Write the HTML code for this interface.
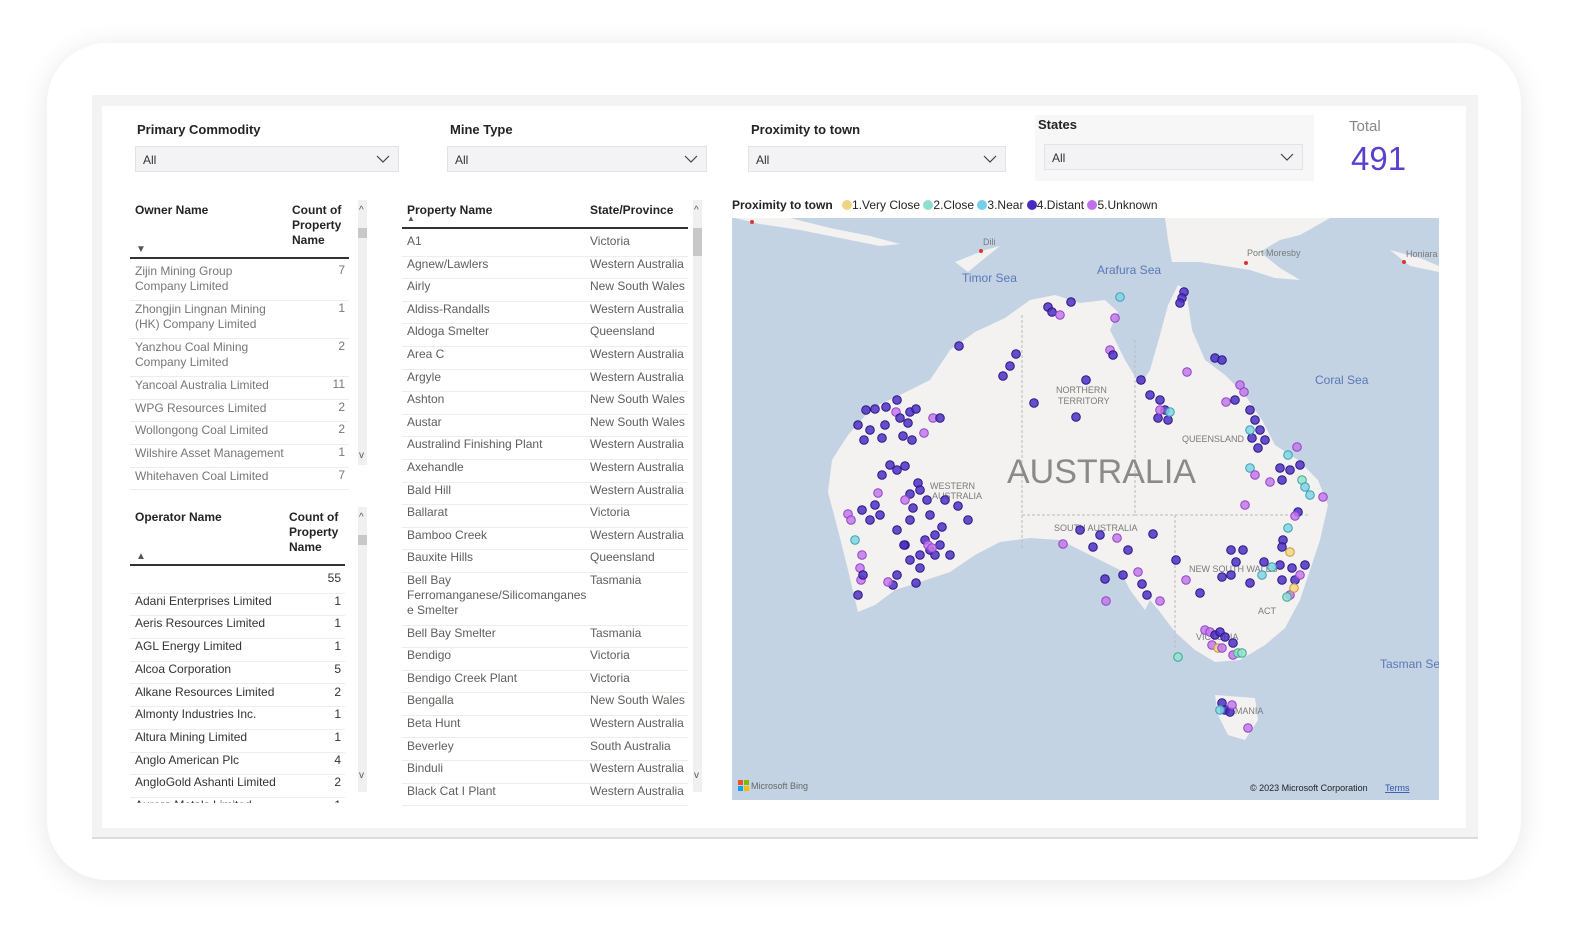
<!DOCTYPE html>
<html><head><meta charset="utf-8">
<style>
*{margin:0;padding:0;box-sizing:border-box}
body{width:1573px;height:934px;background:#fff;font-family:"Liberation Sans",sans-serif;position:relative;overflow:hidden}
.card{position:absolute;left:47px;top:43px;width:1474px;height:837px;border-radius:60px;background:#fff;box-shadow:0 4px 28px rgba(0,0,0,.10)}
.frame{position:absolute;left:92px;top:95px;width:1386px;height:744px;background:#f3f3f4;border-bottom:2px solid #dcdcde}
.panel{position:absolute;left:102px;top:106px;width:1364px;height:722px;background:#fff}
.abs{position:absolute}
.lbl{position:absolute;font-size:13px;font-weight:bold;color:#252423}
.dd{position:absolute;height:26px;background:#f3f3f5;border:1px solid #e3e3e6;font-size:12px;color:#333;padding:6px 7px}
.dd svg{position:absolute;right:8px;top:7px}
.th{position:absolute;font-size:12px;font-weight:bold;color:#252423;line-height:15px}
.row{position:absolute;font-size:12px;color:#605e5c;line-height:15px;border-bottom:1px solid #ededed}
.row .n{position:absolute;right:4px;top:0}
.sb{position:absolute;width:9px;background:#f0f0f0}
.sb .th2{position:absolute;left:0;width:9px;background:#c8c8c8}
.arr{position:absolute;font-size:10px;color:#555}
</style></head><body>
<div class="card"></div>
<div class="frame"></div>
<div class="panel"></div>

<div class="lbl" style="left:137px;top:122px">Primary Commodity</div>
<div class="dd" style="left:135px;top:146px;width:264px">All<svg width="14" height="10"><path d="M1 2 L7 8 L13 2" fill="none" stroke="#444" stroke-width="1.2"/></svg></div>
<div class="lbl" style="left:450px;top:122px">Mine Type</div>
<div class="dd" style="left:447px;top:146px;width:260px">All<svg width="14" height="10"><path d="M1 2 L7 8 L13 2" fill="none" stroke="#444" stroke-width="1.2"/></svg></div>
<div class="lbl" style="left:751px;top:122px">Proximity to town</div>
<div class="dd" style="left:748px;top:146px;width:258px">All<svg width="14" height="10"><path d="M1 2 L7 8 L13 2" fill="none" stroke="#444" stroke-width="1.2"/></svg></div>
<div class="abs" style="left:1035px;top:115px;width:279px;height:66px;background:#f7f7f8"></div>
<div class="lbl" style="left:1038px;top:117px">States</div>
<div class="dd" style="left:1044px;top:144px;width:259px">All<svg width="14" height="10"><path d="M1 2 L7 8 L13 2" fill="none" stroke="#444" stroke-width="1.2"/></svg></div>
<div class="abs" style="left:1349px;top:118px;font-size:15px;color:#8a8886">Total</div>
<div class="abs" style="left:1351px;top:140px;font-size:33px;color:#5a3fd0">491</div>

<div class="th" style="left:135px;top:203px">Owner Name</div>
<div class="th" style="left:292px;top:203px">Count of<br>Property<br>Name</div>
<div class="arr" style="left:136px;top:244px">▼</div>
<div class="abs" style="left:130px;top:257px;width:219px;height:2px;background:#333"></div>
<div class="sb" style="left:358px;top:200px;height:265px"><div class="th2" style="top:28px;height:10px"></div></div>
<div class="arr" style="left:359px;top:205px">^</div>
<div class="arr" style="left:359px;top:450px">v</div>

<div class="th" style="left:135px;top:510px">Operator Name</div>
<div class="th" style="left:289px;top:510px">Count of<br>Property<br>Name</div>
<div class="arr" style="left:136px;top:551px">▲</div>
<div class="abs" style="left:130px;top:564px;width:215px;height:2px;background:#333"></div>
<div class="sb" style="left:358px;top:507px;height:285px"><div class="th2" style="top:28px;height:10px"></div></div>
<div class="arr" style="left:359px;top:512px">^</div>
<div class="arr" style="left:359px;top:770px">v</div>

<div class="th" style="left:407px;top:203px">Property Name</div>
<div class="th" style="left:590px;top:203px">State/Province</div>
<div class="arr" style="left:407px;top:214px;font-size:8px">▲</div>
<div class="abs" style="left:402px;top:227px;width:286px;height:2px;background:#333"></div>
<div class="sb" style="left:693px;top:200px;height:592px"><div class="th2" style="top:28px;height:28px"></div></div>
<div class="arr" style="left:694px;top:205px">^</div>
<div class="arr" style="left:694px;top:770px">v</div>

<div id="rows"></div>
<div id="oprows" class="abs" style="left:0;top:0;width:400px;height:803px;overflow:hidden"></div>

<div class="abs" style="left:732px;top:198px;font-size:12px;color:#252423;white-space:nowrap">
<b>Proximity to town</b>
<span style="display:inline-block;width:10px;height:10px;border-radius:50%;background:#f2d384;margin-left:6px;vertical-align:-1px"></span>1.Very Close
<span style="display:inline-block;width:10px;height:10px;border-radius:50%;background:#8ee0cd;vertical-align:-1px"></span>2.Close
<span style="display:inline-block;width:10px;height:10px;border-radius:50%;background:#74d0e6;vertical-align:-1px"></span>3.Near
<span style="display:inline-block;width:10px;height:10px;border-radius:50%;background:#4a2bc0;vertical-align:-1px"></span>4.Distant
<span style="display:inline-block;width:10px;height:10px;border-radius:50%;background:#c170ec;vertical-align:-1px"></span>5.Unknown
</div>

<svg class="abs" style="left:732px;top:218px" width="707" height="582" viewBox="732 218 707 582">
<rect x="732" y="218" width="707" height="582" fill="#c3d3e3"/>
<path d="M735 218 L790 218 L830 228 L870 236 L900 244 L880 246 L840 238 L800 230 L760 224 Z" fill="#f3f2f0"/>
<path d="M955 262 L985 250 L1000 246 L985 258 L968 272 Z" fill="#f3f2f0"/>
<path d="M1165 218 L1330 218 L1300 235 L1280 240 L1260 252 L1280 268 L1300 280 L1275 278 L1250 270 L1225 266 L1200 262 L1172 262 L1168 240 Z" fill="#f3f2f0"/>
<path d="M1390 250 L1420 258 L1439 266 L1439 272 L1410 266 Z" fill="#f3f2f0"/>
<path d="M858 612 L848 570 L838 530 L828 492 L832 460 L848 435 L872 408 L900 395 L930 380 L950 350 L975 332 L1005 318 L1030 300 L1055 295 L1080 303 L1105 300 L1118 312 L1110 330 L1125 360 L1140 385 L1150 370 L1160 335 L1168 305 L1178 285 L1186 290 L1192 330 L1205 360 L1225 375 L1245 395 L1262 420 L1275 445 L1298 460 L1318 480 L1328 505 L1320 540 L1310 570 L1300 600 L1285 628 L1265 645 L1240 660 L1215 662 L1195 650 L1175 632 L1160 612 L1150 600 L1145 610 L1130 590 L1120 570 L1100 560 L1080 550 L1060 540 L1030 538 L1000 542 L975 555 L950 572 L920 582 L895 590 L875 605 Z" fill="#f3f2f0"/>
<path d="M1215 695 L1255 698 L1258 720 L1245 740 L1228 735 L1218 715 Z" fill="#f3f2f0"/>
<g stroke="#bbb" stroke-dasharray="3,2" fill="none" stroke-width="1">
<path d="M1022 315 L1022 550"/><path d="M1135 340 L1135 515 L1175 515 L1175 650"/><path d="M1022 515 L1135 515"/><path d="M1175 515 L1310 515"/>
</g>
<g font-family="Liberation Sans,sans-serif" fill="#7a7a7a" font-size="9">
<text x="1056" y="393">NORTHERN</text><text x="1058" y="404">TERRITORY</text>
<text x="1182" y="442">QUEENSLAND</text>
<text x="930" y="489">WESTERN</text><text x="932" y="499">AUSTRALIA</text>
<text x="1054" y="531">SOUTH AUSTRALIA</text>
<text x="1189" y="572">NEW SOUTH WALES</text>
<text x="1258" y="614">ACT</text>
<text x="1196" y="640">VICTORIA</text>
<text x="1218" y="714">TASMANIA</text>
<text x="983" y="245">Dili</text><text x="1247" y="256">Port Moresby</text><text x="1406" y="257">Honiara</text>
</g>
<text x="1007" y="483" font-family="Liberation Sans,sans-serif" font-size="34" fill="#8a8a8a">AUSTRALIA</text>
<g font-family="Liberation Sans,sans-serif" fill="#5a78b8" font-size="12">
<text x="962" y="282">Timor Sea</text><text x="1097" y="274">Arafura Sea</text><text x="1315" y="384">Coral Sea</text><text x="1380" y="668">Tasman Sea</text>
</g>
<circle cx="981" cy="251" r="2" fill="#d33"/><circle cx="1246" cy="263" r="2" fill="#d33"/><circle cx="1404" cy="262" r="2" fill="#d33"/><circle cx="752" cy="222" r="2" fill="#d33"/>
<g id="dots" stroke-width="1"></g>
<rect x="738" y="780" width="5" height="5" fill="#f25022"/><rect x="744" y="780" width="5" height="5" fill="#7fba00"/><rect x="738" y="786" width="5" height="5" fill="#00a4ef"/><rect x="744" y="786" width="5" height="5" fill="#ffb900"/>
<text x="751" y="789" font-family="Liberation Sans,sans-serif" font-size="9" fill="#666">Microsoft Bing</text>
<text x="1250" y="791" font-family="Liberation Sans,sans-serif" font-size="9" fill="#222">© 2023 Microsoft Corporation</text>
<text x="1385" y="791" font-family="Liberation Sans,sans-serif" font-size="9" fill="#3355aa" text-decoration="underline">Terms</text>
</svg>

<script>
(function(){
var h='',h2='';
var own=[["Zijin Mining Group<br>Company Limited",7,38],["Zhongjin Lingnan Mining<br>(HK) Company Limited",1,38],["Yanzhou Coal Mining<br>Company Limited",2,38],["Yancoal Australia Limited",11,22.7],["WPG Resources Limited",2,22.7],["Wollongong Coal Limited",2,22.7],["Wilshire Asset Management",1,22.7],["Whitehaven Coal Limited",7,22.7]];
var y=263;
own.forEach(function(r){h+='<div class="row" style="left:130px;top:'+y+'px;width:219px;height:'+r[2]+'px;padding:1px 5px;color:#777">'+r[0]+'<span class="n">'+r[1]+'</span></div>';y+=r[2];});
var op=[["",55],["Adani Enterprises Limited",1],["Aeris Resources Limited",1],["AGL Energy Limited",1],["Alcoa Corporation",5],["Alkane Resources Limited",2],["Almonty Industries Inc.",1],["Altura Mining Limited",1],["Anglo American Plc",4],["AngloGold Ashanti Limited",2],["Aurora Metals Limited",1]];
y=571;
op.forEach(function(r){h2+='<div class="row" style="left:130px;top:'+y+'px;width:215px;height:22.7px;padding:0 5px;color:#333">'+r[0]+'<span class="n">'+r[1]+'</span></div>';y+=22.7;});
var pr=[["A1","Victoria"],["Agnew/Lawlers","Western Australia"],["Airly","New South Wales"],["Aldiss-Randalls","Western Australia"],["Aldoga Smelter","Queensland"],["Area C","Western Australia"],["Argyle","Western Australia"],["Ashton","New South Wales"],["Austar","New South Wales"],["Australind Finishing Plant","Western Australia"],["Axehandle","Western Australia"],["Bald Hill","Western Australia"],["Ballarat","Victoria"],["Bamboo Creek","Western Australia"],["Bauxite Hills","Queensland"],["Bell Bay<br>Ferromanganese/Silicomanganes<br>e Smelter","Tasmania",3],["Bell Bay Smelter","Tasmania"],["Bendigo","Victoria"],["Bendigo Creek Plant","Victoria"],["Bengalla","New South Wales"],["Beta Hunt","Western Australia"],["Beverley","South Australia"],["Binduli","Western Australia"],["Black Cat I Plant","Western Australia"]];
y=234;
pr.forEach(function(r){var hh=r[2]?52.5:22.6;h+='<div class="row" style="left:402px;top:'+y+'px;width:286px;height:'+hh+'px;padding:0 5px">'+r[0]+'<span style="position:absolute;left:188px;top:0">'+r[1]+'</span></div>';y+=hh;});
document.getElementById('rows').innerHTML=h;
document.getElementById('oprows').innerHTML=h2;
var C={D:['#4d30c4','#2a1680'],U:['#c27ae9','#9440c8'],N:['#80d4e4','#3a9fb5'],C:['#95e2cf','#3aa690'],V:['#f3d68a','#c59a30']};
var d="1048,307 1052,312 1060,315U 1071,302 1120,297N 1115,318U 1184,292 1182,298 1180,303 959,346 1016,354 1010,366 1003,376 1110,350U 1113,355 1086,380 1034,403 1076,417 1141,380 1150,395 1160,400 1165,410 1168,420 1158,418 1215,358 1222,360 1187,372U 1240,385U 1244,392U 1226,402U 1235,400 1250,410 1255,420 1260,430 1265,440 1258,448 1252,438 1250,430N 866,410 875,409 886,407 897,400 896,412U 900,418 910,412 916,409 908,423 903,436 912,440 885,425 882,438 870,430 858,425 864,440 924,433U 933,418U 940,418 890,465 897,470 905,466 882,475 918,483 920,490 910,494 913,508 927,500 930,515 945,500 958,506 968,520 942,527 935,535 925,540 930,550 935,555 940,545 928,545U 932,548U 950,555 920,555 905,545 910,560 920,568 897,575 893,585 916,583 888,582U 878,493U 875,505 880,515 870,520 862,510 848,514U 851,520U 855,540N 862,555U 860,568U 861,580U 863,575 858,595 904,545 905,500U 897,530 910,520 1080,530 1100,535 1093,547 1128,550 1117,538U 1153,534 1063,544U 1105,579 1123,575 1138,572U 1142,584 1106,601U 1160,601U 1147,595 1282,480 1290,470 1300,465 1297,447U 1288,455N 1280,468 1302,480C 1305,487N 1310,495N 1323,497U 1298,512 1295,516U 1288,528N 1283,540 1282,547 1290,552V 1231,550 1243,550 1236,562 1231,575 1222,577 1176,560 1186,580U 1200,593 1264,562 1280,565 1292,568 1295,580 1305,565 1300,575U 1272,567N 1282,580 1262,575N 1250,583 1290,595U 1287,597C 1294,588V 1205,630U 1210,632U 1215,635 1220,632 1225,637 1212,645U 1218,648V 1222,648U 1233,643 1233,655U 1238,653C 1242,653C 1178,657C 1222,703 1225,710 1230,712 1232,705U 1248,728U 1220,710N 1170,412N 1160,410U 1250,468N 1255,475U 1270,482U 1245,505U".split(' ');
var s='';
d.forEach(function(p){var t=p.replace(/[0-9,.]/g,'')||'D';var xy=p.replace(/[A-Z]/g,'').split(',');var c=C[t];s+='<circle cx="'+xy[0]+'" cy="'+xy[1]+'" r="4.3" fill="'+c[0]+'" fill-opacity=".85" stroke="'+c[1]+'"/>';});
document.getElementById('dots').innerHTML=s;
})();
</script>
</body></html>
